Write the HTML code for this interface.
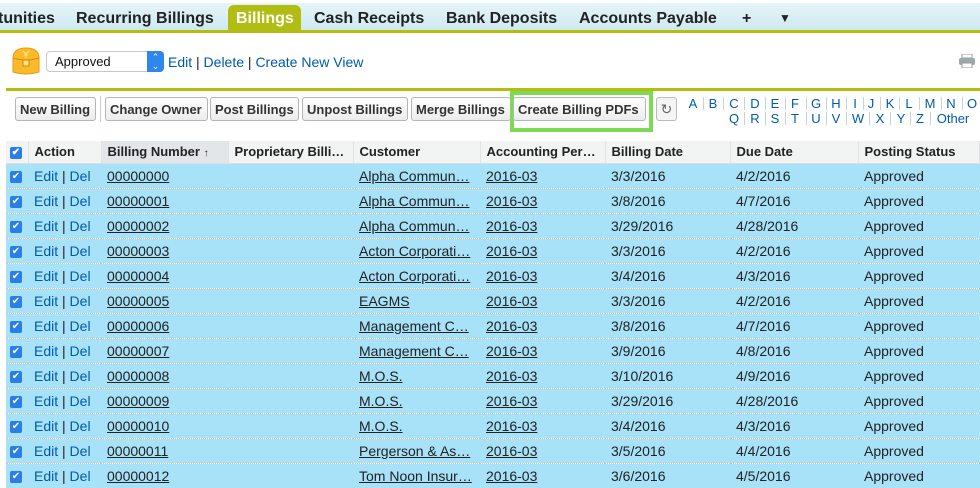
<!DOCTYPE html>
<html><head><meta charset="utf-8"><style>
*{box-sizing:border-box;margin:0;padding:0}
body{width:980px;height:487px;overflow:hidden;background:#fff;font-family:"Liberation Sans",Arial,sans-serif;position:relative}
.tabs{position:absolute;left:0;top:3px;width:980px;height:30px;background:linear-gradient(#e6f4f8,#cfe9f1);border-bottom:3px solid #b3bf0a}
.tabs span{position:absolute;top:7px;font-size:16px;font-weight:bold;color:#222}
.tab-act{position:absolute;left:228px;top:2px;width:73px;height:28px;background:#b1bd13;border-radius:6px 6px 0 0}
.abs{position:absolute}
a{color:#015ba7;text-decoration:none}
.btn{position:absolute;top:97px;height:24px;border:1px solid #b5b5b5;border-radius:3px;background:linear-gradient(#fff,#ececec);font-size:13px;font-weight:bold;color:#333;padding:4px 4px 0;white-space:nowrap}
.al{position:absolute;font-size:13px;color:#015ba7;transform:translateX(-50%)}
.sp{position:absolute;width:1px;height:13px;background:#c5d3dc}
table{position:absolute;left:6px;top:141px;border-collapse:collapse;width:974px;table-layout:fixed}
th{height:22px;background:#f2f3f3;text-align:left;font-size:13px;color:#222;padding-left:6px;border-bottom:1px solid #ddd;border-right:1px solid #e0e3e5;white-space:nowrap;overflow:hidden}
td{height:25px;background:#a7e2f9;font-size:14px;color:#222;padding-left:6px;border-top:1px dotted #c9c9c9;white-space:nowrap;overflow:hidden}
td u{color:#222}
.cb{display:inline-block;width:12px;height:12px;background:#2a7ee6;border-radius:2px;color:#fff;font-size:10px;line-height:12px;text-align:center;vertical-align:middle}
</style></head><body>
<div class="tabs">
<div class="tab-act"></div>
<span style="left:-2px">tunities</span>
<span style="left:76px">Recurring Billings</span>
<span style="left:236px;color:#fff">Billings</span>
<span style="left:314px">Cash Receipts</span>
<span style="left:446px">Bank Deposits</span>
<span style="left:579px">Accounts Payable</span>
<span style="left:742px">+</span>
<span style="left:779px;font-size:12px;top:8px">▼</span>
</div>
<svg class="abs" style="left:10px;top:45px" width="32" height="32" viewBox="0 0 32 32"><path d="M3 12 Q4 3 16 3 Q28 3 29 12 L29 27 Q16 31 3 27Z" fill="#fbb92c" stroke="#e89a10"/><path d="M3 13 Q16 17 29 13" stroke="#e08a00" fill="none"/><rect x="13" y="15" width="6" height="6" fill="#ffe58a" stroke="#d08a00"/><path d="M13 6 l3 3 3-3 M16 9 v4 M14 10h4" stroke="#ffe58a" fill="none"/></svg>
<div class="abs" style="left:46px;top:51px;width:118px;height:21px;border:1px solid #c8c8c8;border-radius:4px;font-size:13px;padding:2px 8px;color:#111">Approved</div>
<div class="abs" style="left:147px;top:51px;width:17px;height:21px;background:#2f86ec;border-radius:0 4px 4px 0;color:#fff;font-size:9px;text-align:center;line-height:9px;padding-top:2px">⌃<br>⌄</div>
<div class="abs" style="left:168px;top:54px;font-size:14px;color:#222"><a>Edit</a> | <a>Delete</a> | <a>Create New View</a></div>
<svg class="abs" style="left:958px;top:54px" width="18" height="14"><rect x="4" y="0" width="10" height="4" fill="#fff" stroke="#999"/><rect x="1" y="4" width="16" height="7" rx="2" fill="#9aa"/><rect x="4" y="9" width="10" height="5" fill="#fff" stroke="#999"/></svg>
<div class="abs" style="left:6px;top:88px;width:974px;height:3px;background:#b3bf0a"></div>
<div class="btn" style="left:15px;width:81px">New Billing</div>
<div class="abs" style="left:100px;top:96px;width:1px;height:26px;background:#ccc"></div>
<div class="btn" style="left:105px;width:103px">Change Owner</div>
<div class="btn" style="left:210px;width:89px">Post Billings</div>
<div class="btn" style="left:302px;width:106px">Unpost Billings</div>
<div class="btn" style="left:411px;width:100px">Merge Billings</div>
<div class="abs" style="left:510px;top:91px;width:143px;height:41px;border:4px solid #7ed957"></div>
<div class="btn" style="left:513px;width:133px">Create Billing PDFs</div>
<div class="abs" style="left:656px;top:97px;width:21px;height:24px;border:1px solid #bbb;border-radius:3px;background:#f4f4f4;font-size:14px;text-align:center;color:#666;line-height:22px">↻</div>
<div class="al" style="left:693px;top:96px">A</div><div class="al" style="left:713px;top:96px">B</div><div class="al" style="left:734px;top:96px">C</div><div class="al" style="left:755px;top:96px">D</div><div class="al" style="left:775px;top:96px">E</div><div class="al" style="left:795px;top:96px">F</div><div class="al" style="left:816px;top:96px">G</div><div class="al" style="left:836px;top:96px">H</div><div class="al" style="left:855px;top:96px">I</div><div class="al" style="left:871px;top:96px">J</div><div class="al" style="left:890px;top:96px">K</div><div class="al" style="left:909px;top:96px">L</div><div class="al" style="left:930px;top:96px">M</div><div class="al" style="left:951px;top:96px">N</div><div class="al" style="left:972px;top:96px">O</div>
<div class="al" style="left:734px;top:111px">Q</div><div class="al" style="left:755px;top:111px">R</div><div class="al" style="left:775px;top:111px">S</div><div class="al" style="left:795px;top:111px">T</div><div class="al" style="left:816px;top:111px">U</div><div class="al" style="left:836px;top:111px">V</div><div class="al" style="left:858px;top:111px">W</div><div class="al" style="left:880px;top:111px">X</div><div class="al" style="left:901px;top:111px">Y</div><div class="al" style="left:920px;top:111px">Z</div><div class="al" style="left:953px;top:111px">Other</div>
<div class="sp" style="left:703px;top:97px"></div><div class="sp" style="left:723px;top:97px"></div><div class="sp" style="left:744px;top:97px"></div><div class="sp" style="left:765px;top:97px"></div><div class="sp" style="left:785px;top:97px"></div><div class="sp" style="left:806px;top:97px"></div><div class="sp" style="left:826px;top:97px"></div><div class="sp" style="left:846px;top:97px"></div><div class="sp" style="left:863px;top:97px"></div><div class="sp" style="left:880px;top:97px"></div><div class="sp" style="left:899px;top:97px"></div><div class="sp" style="left:919px;top:97px"></div><div class="sp" style="left:941px;top:97px"></div><div class="sp" style="left:962px;top:97px"></div>
<div class="sp" style="left:744px;top:112px"></div><div class="sp" style="left:765px;top:112px"></div><div class="sp" style="left:785px;top:112px"></div><div class="sp" style="left:806px;top:112px"></div><div class="sp" style="left:826px;top:112px"></div><div class="sp" style="left:846px;top:112px"></div><div class="sp" style="left:869px;top:112px"></div><div class="sp" style="left:890px;top:112px"></div><div class="sp" style="left:910px;top:112px"></div><div class="sp" style="left:930px;top:112px"></div>
<table>
<colgroup><col style="width:22px"><col style="width:73px"><col style="width:127px"><col style="width:125px"><col style="width:127px"><col style="width:125px"><col style="width:125px"><col style="width:128px"><col></colgroup>
<tr><th style="padding-left:4px"><span class="cb">✔</span></th><th>Action</th><th style="background:#e3e6e8">Billing Number <span style="font-size:10px">↑</span></th><th>Proprietary Billi…</th><th>Customer</th><th>Accounting Per…</th><th>Billing Date</th><th>Due Date</th><th>Posting Status</th></tr>
<tr><td style="padding-left:4px"><span class="cb">✔</span></td><td><a>Edit</a> | <a>Del</a></td><td><u>00000000</u></td><td></td><td><u>Alpha Commun…</u></td><td><u>2016-03</u></td><td>3/3/2016</td><td>4/2/2016</td><td>Approved</td></tr>
<tr><td style="padding-left:4px"><span class="cb">✔</span></td><td><a>Edit</a> | <a>Del</a></td><td><u>00000001</u></td><td></td><td><u>Alpha Commun…</u></td><td><u>2016-03</u></td><td>3/8/2016</td><td>4/7/2016</td><td>Approved</td></tr>
<tr><td style="padding-left:4px"><span class="cb">✔</span></td><td><a>Edit</a> | <a>Del</a></td><td><u>00000002</u></td><td></td><td><u>Alpha Commun…</u></td><td><u>2016-03</u></td><td>3/29/2016</td><td>4/28/2016</td><td>Approved</td></tr>
<tr><td style="padding-left:4px"><span class="cb">✔</span></td><td><a>Edit</a> | <a>Del</a></td><td><u>00000003</u></td><td></td><td><u>Acton Corporati…</u></td><td><u>2016-03</u></td><td>3/3/2016</td><td>4/2/2016</td><td>Approved</td></tr>
<tr><td style="padding-left:4px"><span class="cb">✔</span></td><td><a>Edit</a> | <a>Del</a></td><td><u>00000004</u></td><td></td><td><u>Acton Corporati…</u></td><td><u>2016-03</u></td><td>3/4/2016</td><td>4/3/2016</td><td>Approved</td></tr>
<tr><td style="padding-left:4px"><span class="cb">✔</span></td><td><a>Edit</a> | <a>Del</a></td><td><u>00000005</u></td><td></td><td><u>EAGMS</u></td><td><u>2016-03</u></td><td>3/3/2016</td><td>4/2/2016</td><td>Approved</td></tr>
<tr><td style="padding-left:4px"><span class="cb">✔</span></td><td><a>Edit</a> | <a>Del</a></td><td><u>00000006</u></td><td></td><td><u>Management C…</u></td><td><u>2016-03</u></td><td>3/8/2016</td><td>4/7/2016</td><td>Approved</td></tr>
<tr><td style="padding-left:4px"><span class="cb">✔</span></td><td><a>Edit</a> | <a>Del</a></td><td><u>00000007</u></td><td></td><td><u>Management C…</u></td><td><u>2016-03</u></td><td>3/9/2016</td><td>4/8/2016</td><td>Approved</td></tr>
<tr><td style="padding-left:4px"><span class="cb">✔</span></td><td><a>Edit</a> | <a>Del</a></td><td><u>00000008</u></td><td></td><td><u>M.O.S.</u></td><td><u>2016-03</u></td><td>3/10/2016</td><td>4/9/2016</td><td>Approved</td></tr>
<tr><td style="padding-left:4px"><span class="cb">✔</span></td><td><a>Edit</a> | <a>Del</a></td><td><u>00000009</u></td><td></td><td><u>M.O.S.</u></td><td><u>2016-03</u></td><td>3/29/2016</td><td>4/28/2016</td><td>Approved</td></tr>
<tr><td style="padding-left:4px"><span class="cb">✔</span></td><td><a>Edit</a> | <a>Del</a></td><td><u>00000010</u></td><td></td><td><u>M.O.S.</u></td><td><u>2016-03</u></td><td>3/4/2016</td><td>4/3/2016</td><td>Approved</td></tr>
<tr><td style="padding-left:4px"><span class="cb">✔</span></td><td><a>Edit</a> | <a>Del</a></td><td><u>00000011</u></td><td></td><td><u>Pergerson &amp; As…</u></td><td><u>2016-03</u></td><td>3/5/2016</td><td>4/4/2016</td><td>Approved</td></tr>
<tr><td style="padding-left:4px"><span class="cb">✔</span></td><td><a>Edit</a> | <a>Del</a></td><td><u>00000012</u></td><td></td><td><u>Tom Noon Insur…</u></td><td><u>2016-03</u></td><td>3/6/2016</td><td>4/5/2016</td><td>Approved</td></tr>
</table>
</body></html>
